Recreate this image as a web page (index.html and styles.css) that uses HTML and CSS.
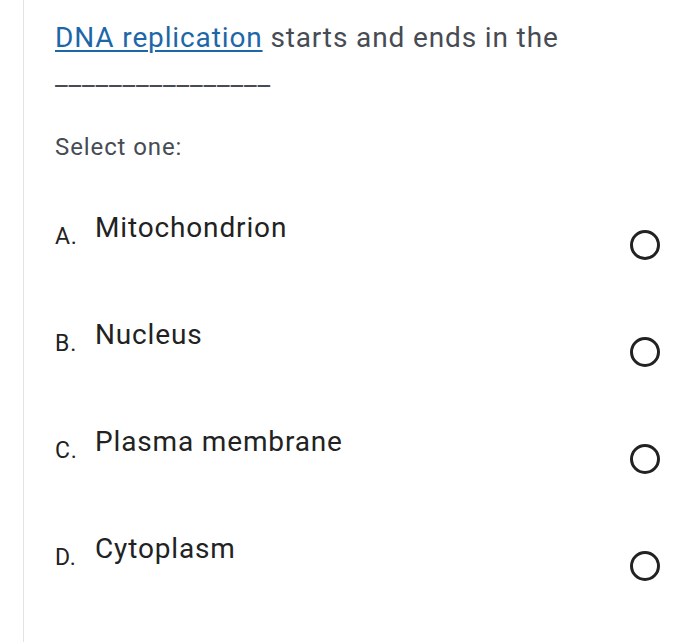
FILE: index.html
```html
<!DOCTYPE html>
<html>
<head>
<meta charset="utf-8">
<link rel="stylesheet" href="styles.css">
</head>
<body>
<div class="question">
  <div class="qtext"><a class="link" href="#">DNA replication</a> starts and ends in the<br>________________</div>
  <div class="prompt">Select one:</div>
  <div class="answers">
    <div class="option">
      <span class="letter">A.</span>
      <span class="label">Mitochondrion</span>
      <span class="radio"></span>
    </div>
    <div class="option">
      <span class="letter">B.</span>
      <span class="label">Nucleus</span>
      <span class="radio"></span>
    </div>
    <div class="option">
      <span class="letter">C.</span>
      <span class="label">Plasma membrane</span>
      <span class="radio"></span>
    </div>
    <div class="option">
      <span class="letter">D.</span>
      <span class="label">Cytoplasm</span>
      <span class="radio"></span>
    </div>
  </div>
</div>
</body>
</html>
```
FILE: styles.css
```css
html, body {
  margin: 0;
  padding: 0;
  background: #ffffff;
}
body {
  font-family: Roboto, "Liberation Sans", sans-serif;
  height: 642px;
  overflow: hidden;
}
.question {
  margin-left: 23px;
  border-left: 1px solid #e3e3e3;
  padding: 19px 32px 0 31px;
  min-height: 642px;
  box-sizing: border-box;
}
.qtext {
  font-size: 28px;
  line-height: 38px;
  letter-spacing: 0.87px;
  color: #474b53;
}
.link {
  color: #1c67a8;
  text-decoration: underline;
  text-decoration-thickness: 2px;
  text-underline-offset: 3px;
}
.prompt {
  margin-top: 38px;
  font-size: 24px;
  line-height: 28px;
  letter-spacing: 0.9px;
  color: #474b53;
}
.answers {
  margin-top: 51px;
  display: flex;
  flex-direction: column;
}
.option {
  display: flex;
  align-items: flex-start;
  height: 107px;
}
.letter {
  font-size: 23px;
  line-height: 26px;
  letter-spacing: 0.8px;
  margin-top: 12px;
  width: 40px;
  color: #222222;
}
.label {
  font-size: 28px;
  line-height: 32px;
  letter-spacing: 0.85px;
  color: #222222;
}
.radio {
  margin-left: auto;
  margin-top: 18px;
  width: 30px;
  height: 30px;
  box-sizing: border-box;
  border: 3px solid #222222;
  border-radius: 50%;
}
```
